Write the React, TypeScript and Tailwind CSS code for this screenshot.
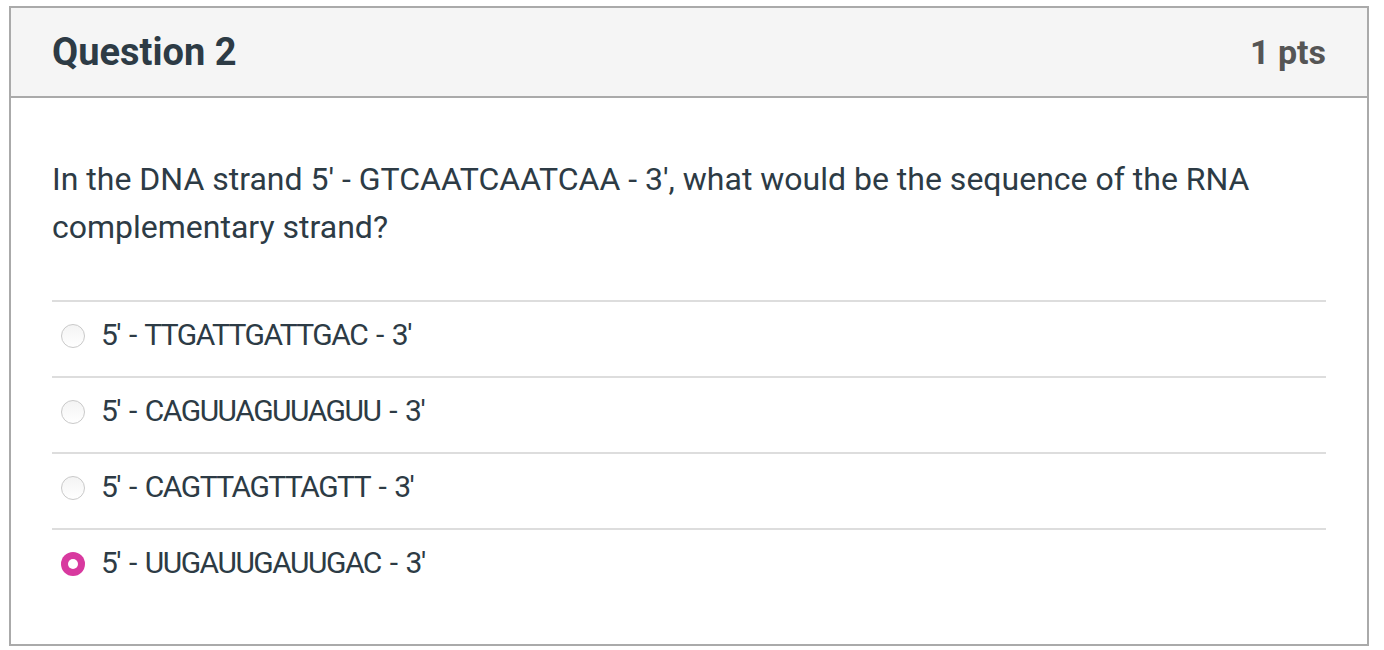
const options = [
  { label: "5' - TTGATTGATTGAC - 3'", checked: false },
  { label: "5' - CAGUUAGUUAGUU - 3'", checked: false },
  { label: "5' - CAGTTAGTTAGTT - 3'", checked: false },
  { label: "5' - UUGAUUGAUUGAC - 3'", checked: true },
];

function Radio({ checked }: { checked: boolean }) {
  if (checked) {
    return (
      <span className="mt-[4px] flex h-[24px] w-[24px] shrink-0 items-center justify-center rounded-full bg-[#d8399f]">
        <span className="h-[10px] w-[10px] rounded-full bg-white" />
      </span>
    );
  }
  return (
    <span className="mt-[4px] block h-[24px] w-[24px] shrink-0 rounded-full border border-[#c9c9c9] bg-gradient-to-b from-[#f4f4f4] to-white" />
  );
}

export default function App() {
  return (
    <div className="min-h-[650px] bg-white pl-[9px] pt-[6px] font-['Roboto',sans-serif] text-[#2d3b45]">
      <div className="w-[1360px] border-2 border-[#aaaaaa]">
        <div className="flex h-[90px] items-center justify-between border-b-2 border-[#aaaaaa] bg-[#f5f5f5] px-[41px]">
          <h2 className="text-[38px] font-bold text-[#2d3b45]">Question 2</h2>
          <div className="text-[34px] font-bold text-[#555555]">1 pts</div>
        </div>

        <div className="px-[41px] pb-[40px] pt-[57px]">
          <p className="text-[32px] leading-[48px]">
            In the DNA strand 5' - GTCAATCAATCAA - 3', what would be the sequence of the RNA
            <br />
            complementary strand?
          </p>

          <div className="mt-[49px]">
            {options.map((o) => (
              <label
                key={o.label}
                className="flex h-[76px] items-start gap-[16px] border-t-2 border-[#dddddd] pl-[9px] pt-[8px]"
              >
                <span className="flex h-[48px] items-center">
                  <Radio checked={o.checked} />
                </span>
                <span className="pt-[1px] text-[30px] leading-[48px] tracking-[-1.5px] [word-spacing:3px]">
                  {o.label}
                </span>
              </label>
            ))}
          </div>
        </div>
      </div>
    </div>
  );
}
